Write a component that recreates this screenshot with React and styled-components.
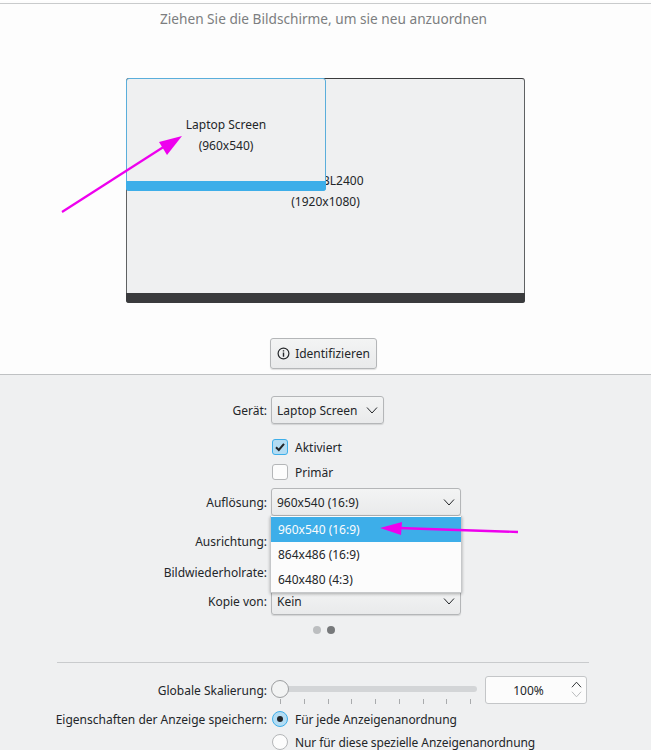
import React from "react";
import styled, { createGlobalStyle } from "styled-components";

const textColor = "#232629";
const blue = "#3daee9";
const magenta = "#ee00ee";

const GlobalStyle = createGlobalStyle`
  html, body {
    margin: 0;
    padding: 0;
    background: #eff0f1;
  }
  * {
    box-sizing: border-box;
  }
`;

const Page = styled.div`
  position: relative;
  width: 651px;
  height: 750px;
  overflow: hidden;
  display: flex;
  flex-direction: column;
  font-family: "Noto Sans", sans-serif;
  font-size: 12px;
  color: ${textColor};
`;

const Preview = styled.section`
  height: 375px;
  flex: none;
  background: #fdfdfd;
  border-top: 1px solid #fff;
  border-bottom: 1px solid #bfc1c3;
  display: flex;
  flex-direction: column;
  align-items: center;
  &::before {
    content: "";
    position: absolute;
    top: 3px;
    left: 0;
    right: 0;
    height: 1px;
    background: #c9cbcc;
  }
`;

const Hint = styled.div`
  margin-top: 9px;
  margin-right: 4px;
  height: 18px;
  line-height: 18px;
  font-size: 13.67px;
  color: #7c7e80;
  white-space: nowrap;
`;

const Canvas = styled.div`
  position: relative;
  width: 399px;
  height: 225px;
  margin-top: 50px;
`;

const Screen = styled.div`
  position: absolute;
  left: 0;
  top: 0;
  width: ${(p) => p.$width}px;
  height: ${(p) => p.$height}px;
  background: #eff0f1;
  border: 1px solid ${(p) => (p.$active ? "#5aaedb" : "#5f6163")};
  border-top-color: ${(p) => (p.$active ? "#5aaedb" : "#3a3b3d")};
  border-radius: 3px;
  &::after {
    content: "";
    position: absolute;
    left: -1px;
    right: -1px;
    bottom: -1px;
    height: 10px;
    border-radius: 0 0 3px 3px;
    background: ${(p) => (p.$active ? blue : "#3a3b3d")};
  }
`;

const ScreenLabel = styled.div`
  position: absolute;
  inset: 0;
  display: flex;
  flex-direction: column;
  align-items: center;
  justify-content: center;
  line-height: 21px;
  white-space: nowrap;
`;

const IdentifyButton = styled.button`
  margin-top: 35px;
  margin-right: 4px;
  width: 107px;
  height: 31px;
  display: flex;
  align-items: center;
  justify-content: center;
  gap: 5px;
  padding: 0;
  font: inherit;
  color: ${textColor};
  background: linear-gradient(#f3f4f4, #e9eaeb);
  border: 1px solid #b4b6b8;
  border-radius: 3px;
  box-shadow: 0 1px 1px rgba(0, 0, 0, 0.12);
`;

const Settings = styled.section`
  flex: 1;
  background: #eff0f1;
  padding-top: 21px;
`;

const FormRow = styled.div`
  display: grid;
  grid-template-columns: 267px 1fr;
  column-gap: 4px;
  align-items: center;
  height: ${(p) => p.$height || 28}px;
  margin-top: ${(p) => p.$top || 0}px;
`;

const Label = styled.div`
  text-align: right;
  white-space: nowrap;
`;

const ComboBox = styled.div`
  width: ${(p) => p.$width}px;
  height: 28px;
  padding: 0 5px 0 5px;
  display: flex;
  align-items: center;
  justify-content: space-between;
  background: linear-gradient(#f3f4f4, #e9eaeb);
  border: 1px solid #b4b6b8;
  border-radius: 3px;
  box-shadow: 0 1px 1px rgba(0, 0, 0, 0.12);
`;

const Popup = styled.div`
  position: absolute;
  left: 270px;
  top: 516px;
  width: 192px;
  height: 77px;
  padding-top: 1px;
  background: #fcfcfc;
  border: 1px solid #c6c8ca;
  border-top: none;
  box-shadow: 0 1px 3px rgba(0, 0, 0, 0.3);
  z-index: 2;
`;

const PopupItem = styled.div`
  height: 25px;
  line-height: 25px;
  padding-left: 7px;
  background: ${(p) => (p.$selected ? blue : "transparent")};
  color: ${(p) => (p.$selected ? "#fcfcfc" : textColor)};
`;

const CheckRow = styled.label`
  display: flex;
  align-items: center;
  gap: 7px;
  white-space: nowrap;
  letter-spacing: ${(p) => (p.$tight ? "-0.09px" : "normal")};
`;

const CheckBox = styled.span`
  width: 16px;
  height: 16px;
  margin-left: 1px;
  display: flex;
  align-items: center;
  justify-content: center;
  border: 1px solid ${(p) => (p.$checked ? blue : "#b4b6b8")};
  border-radius: 3px;
  background: ${(p) => (p.$checked ? "#b3dcf3" : "#fcfcfc")};
`;

const Dots = styled.div`
  display: flex;
  justify-content: center;
  gap: 6px;
  margin-top: 11px;
  margin-right: 4px;
`;

const Dot = styled.span`
  width: 8px;
  height: 8px;
  border-radius: 50%;
  background: ${(p) => (p.$active ? "#77797b" : "#bcbec0")};
`;

const Divider = styled.div`
  height: 1px;
  margin: 28px 62px 0 57px;
  background: #c9cbcd;
`;

const SliderRow = styled.div`
  display: flex;
  align-items: center;
  width: 100%;
`;

const Slider = styled.div`
  position: relative;
  width: 206px;
  height: 28px;
`;

const SliderTrack = styled.div`
  position: absolute;
  left: 9px;
  right: 0;
  top: 10px;
  height: 6px;
  border-radius: 3px;
  background: #d3d5d7;
`;

const SliderHandle = styled.div`
  position: absolute;
  left: 0;
  top: 4px;
  width: 18px;
  height: 18px;
  border-radius: 50%;
  border: 1px solid #9c9ea0;
  background: #f2f3f3;
`;

const SliderTicks = styled.div`
  position: absolute;
  left: 9px;
  top: 23px;
  width: 191px;
  display: flex;
  justify-content: space-between;
`;

const Tick = styled.span`
  width: 1px;
  height: 5px;
  background: #a9abad;
`;

const SpinBox = styled.div`
  position: relative;
  width: 102px;
  height: 28px;
  margin-left: 8px;
  display: flex;
  align-items: center;
  justify-content: center;
  padding-right: 15px;
  background: #fcfcfc;
  border: 1px solid #c4c6c8;
  border-radius: 3px;
`;

const SpinArrows = styled.div`
  position: absolute;
  right: 4px;
  top: 4px;
  display: flex;
  flex-direction: column;
  gap: 3px;
`;

const RadioOuter = styled.span`
  width: 16px;
  height: 16px;
  margin-left: 1px;
  display: flex;
  align-items: center;
  justify-content: center;
  border-radius: 50%;
  border: 1px solid ${(p) => (p.$checked ? blue : "#b4b6b8")};
  background: ${(p) => (p.$checked ? "#b3dcf3" : "#fcfcfc")};
  &::after {
    content: "";
    display: ${(p) => (p.$checked ? "block" : "none")};
    width: 6px;
    height: 6px;
    border-radius: 50%;
    background: ${textColor};
  }
`;

const ArrowLayer = styled.svg`
  position: absolute;
  left: 0;
  top: 0;
  z-index: 3;
  pointer-events: none;
`;

function Chevron({ up, color = textColor, width = 12, height = 7 }) {
  return (
    <svg width={width} height={height} viewBox="0 0 12 7" fill="none">
      <path
        d={up ? "M1 6.5 6 1l5 5.5" : "M1 .5 6 6l5-5.5"}
        stroke={color}
        strokeWidth="1"
      />
    </svg>
  );
}

function InfoIcon() {
  return (
    <svg width="13" height="13" viewBox="0 0 13 13" fill="none">
      <circle cx="6.5" cy="6.5" r="5.4" stroke={textColor} strokeWidth="1.2" />
      <path d="M6.5 5.5v4.2M6.5 3.2v1.3" stroke={textColor} strokeWidth="1.4" />
    </svg>
  );
}

function App() {
  return (
    <Page>
      <GlobalStyle />
      <Preview>
        <Hint>Ziehen Sie die Bildschirme, um sie neu anzuordnen</Hint>
        <Canvas>
          <Screen $width={399} $height={225}>
            <ScreenLabel>
              <span>BenQ BL2400</span>
              <span>(1920x1080)</span>
            </ScreenLabel>
          </Screen>
          <Screen $width={200} $height={113} $active>
            <ScreenLabel>
              <span>Laptop Screen</span>
              <span>(960x540)</span>
            </ScreenLabel>
          </Screen>
        </Canvas>
        <IdentifyButton>
          <InfoIcon />
          Identifizieren
        </IdentifyButton>
      </Preview>

      <Settings>
        <FormRow>
          <Label>Gerät:</Label>
          <ComboBox $width={113}>
            Laptop Screen
            <Chevron />
          </ComboBox>
        </FormRow>
        <FormRow $height={24} $top={11}>
          <span />
          <CheckRow>
            <CheckBox $checked>
              <svg width="12" height="12" viewBox="0 0 12 12" fill="none">
                <path d="M2 6.2 4.8 9 10 2.8" stroke={textColor} strokeWidth="2" />
              </svg>
            </CheckBox>
            Aktiviert
          </CheckRow>
        </FormRow>
        <FormRow $height={24} $top={1}>
          <span />
          <CheckRow>
            <CheckBox />
            Primär
          </CheckRow>
        </FormRow>
        <FormRow $top={4}>
          <Label>Auflösung:</Label>
          <ComboBox $width={190}>
            960x540 (16:9)
            <Chevron />
          </ComboBox>
        </FormRow>
        <FormRow $top={11}>
          <Label>Ausrichtung:</Label>
          <ComboBox $width={190} />
        </FormRow>
        <FormRow $top={3}>
          <Label>Bildwiederholrate:</Label>
          <ComboBox $width={190} />
        </FormRow>
        <FormRow $top={1}>
          <Label>Kopie von:</Label>
          <ComboBox $width={190}>
            Kein
            <Chevron />
          </ComboBox>
        </FormRow>
        <Popup>
          <PopupItem $selected>960x540 (16:9)</PopupItem>
          <PopupItem>864x486 (16:9)</PopupItem>
          <PopupItem>640x480 (4:3)</PopupItem>
        </Popup>
        <Dots>
          <Dot />
          <Dot $active />
        </Dots>
        <Divider />
        <FormRow $top={13}>
          <Label>Globale Skalierung:</Label>
          <SliderRow>
            <Slider>
              <SliderTrack />
              <SliderTicks>
                {Array.from({ length: 9 }, (_, i) => (
                  <Tick key={i} />
                ))}
              </SliderTicks>
              <SliderHandle />
            </Slider>
            <SpinBox>
              100%
              <SpinArrows>
                <Chevron up width={11} height={7} />
                <Chevron color="#b4b6b8" width={11} height={7} />
              </SpinArrows>
            </SpinBox>
          </SliderRow>
        </FormRow>
        <FormRow $height={24} $top={3}>
          <Label>Eigenschaften der Anzeige speichern:</Label>
          <CheckRow $tight>
            <RadioOuter $checked />
            Für jede Anzeigenanordnung
          </CheckRow>
        </FormRow>
        <FormRow $height={24} $top={-1}>
          <span />
          <CheckRow $tight>
            <RadioOuter />
            Nur für diese spezielle Anzeigenanordnung
          </CheckRow>
        </FormRow>
      </Settings>

      <ArrowLayer width="651" height="750" viewBox="0 0 651 750">
        <path d="M62 212 165 146" stroke={magenta} strokeWidth="2.2" />
        <path d="M182 136 159 142 167 155Z" fill={magenta} />
        <path d="M518 532 398 528" stroke={magenta} strokeWidth="2.4" />
        <path d="M380 528 402 522 401 535Z" fill={magenta} />
      </ArrowLayer>
    </Page>
  );
}

export default App;
